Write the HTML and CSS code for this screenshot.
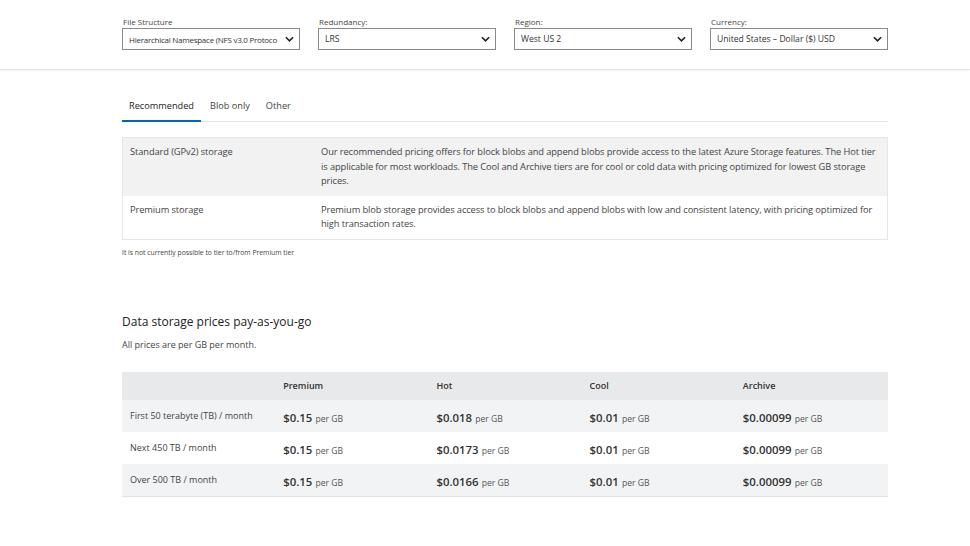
FILE: index.html
```html
<!DOCTYPE html>
<html lang="en">
<head>
<meta charset="utf-8">
<title>Azure Blob Storage pricing</title>
<link rel="stylesheet" href="styles.css">
</head>
<body>
<header class="filters">
  <div class="filter">
    <label class="filter-label">File Structure</label>
    <div class="select"><span class="select-value tight">Hierarchical Namespace (NFS v3.0 Protoco</span><svg class="chev" viewBox="0 0 10 6"><path d="M1 1l4 4 4-4" fill="none" stroke="#222" stroke-width="1.8"/></svg></div>
  </div>
  <div class="filter">
    <label class="filter-label">Redundancy:</label>
    <div class="select"><span class="select-value">LRS</span><svg class="chev" viewBox="0 0 10 6"><path d="M1 1l4 4 4-4" fill="none" stroke="#222" stroke-width="1.8"/></svg></div>
  </div>
  <div class="filter">
    <label class="filter-label">Region:</label>
    <div class="select"><span class="select-value">West US 2</span><svg class="chev" viewBox="0 0 10 6"><path d="M1 1l4 4 4-4" fill="none" stroke="#222" stroke-width="1.8"/></svg></div>
  </div>
  <div class="filter">
    <label class="filter-label">Currency:</label>
    <div class="select"><span class="select-value">United States – Dollar ($) USD</span><svg class="chev" viewBox="0 0 10 6"><path d="M1 1l4 4 4-4" fill="none" stroke="#222" stroke-width="1.8"/></svg></div>
  </div>
</header>

<main class="content">
  <nav class="tabs">
    <span class="tab active">Recommended</span>
    <span class="tab">Blob only</span>
    <span class="tab">Other</span>
  </nav>

  <div class="info-table">
    <div class="info-row shaded">
      <div class="info-name">Standard (GPv2) storage</div>
      <div class="info-desc">Our recommended pricing offers for block blobs and append blobs provide access to the latest Azure Storage features. The Hot tier is applicable for most workloads. The Cool and Archive tiers are for cool or cold data with pricing optimized for lowest GB storage prices.</div>
    </div>
    <div class="info-row">
      <div class="info-name">Premium storage</div>
      <div class="info-desc">Premium blob storage provides access to block blobs and append blobs with low and consistent latency, with pricing optimized for high transaction rates.</div>
    </div>
  </div>
  <p class="note">It is not currently possible to tier to/from Premium tier</p>

  <h2 class="section-title">Data storage prices pay-as-you-go</h2>
  <p class="section-sub">All prices are per GB per month.</p>

  <div class="price-table">
    <div class="price-row head">
      <div class="cell"></div>
      <div class="cell">Premium</div>
      <div class="cell">Hot</div>
      <div class="cell">Cool</div>
      <div class="cell">Archive</div>
    </div>
    <div class="price-row shaded">
      <div class="cell label">First 50 terabyte (TB) / month</div>
      <div class="cell"><span class="amt">$0.15</span> <span class="unit">per GB</span></div>
      <div class="cell"><span class="amt">$0.018</span> <span class="unit">per GB</span></div>
      <div class="cell"><span class="amt">$0.01</span> <span class="unit">per GB</span></div>
      <div class="cell"><span class="amt">$0.00099</span> <span class="unit">per GB</span></div>
    </div>
    <div class="price-row">
      <div class="cell label">Next 450 TB / month</div>
      <div class="cell"><span class="amt">$0.15</span> <span class="unit">per GB</span></div>
      <div class="cell"><span class="amt">$0.0173</span> <span class="unit">per GB</span></div>
      <div class="cell"><span class="amt">$0.01</span> <span class="unit">per GB</span></div>
      <div class="cell"><span class="amt">$0.00099</span> <span class="unit">per GB</span></div>
    </div>
    <div class="price-row shaded">
      <div class="cell label">Over 500 TB / month</div>
      <div class="cell"><span class="amt">$0.15</span> <span class="unit">per GB</span></div>
      <div class="cell"><span class="amt">$0.0166</span> <span class="unit">per GB</span></div>
      <div class="cell"><span class="amt">$0.01</span> <span class="unit">per GB</span></div>
      <div class="cell"><span class="amt">$0.00099</span> <span class="unit">per GB</span></div>
    </div>
  </div>
</main>
</body>
</html>
```

FILE: styles.css
```css
* { box-sizing: border-box; }

body {
  margin: 0;
  background: #fff;
  color: #333;
  font-family: "Open Sans", "Noto Sans", sans-serif;
}

.filters {
  display: flex;
  gap: 18px;
  height: 70px;
  padding: 16px 0 0 122px;
  border-bottom: 1px solid #e6e6e6;
  box-shadow: 0 1px 2px rgba(0,0,0,0.05);
}

.filter {
  width: 178px;
  display: flex;
  flex-direction: column;
}

.filter-label {
  font-size: 8px;
  line-height: 12px;
  color: #444;
  padding-left: 1px;
}

.select {
  height: 22px;
  border: 1px solid #8a8a8a;
  display: flex;
  align-items: center;
  padding: 0 5px 0 6px;
  background: #fff;
}

.select-value {
  flex: 1;
  font-size: 8.6px;
  color: #333;
  white-space: nowrap;
  overflow: hidden;
}

.select-value.tight {
  font-size: 8px;
  letter-spacing: -0.25px;
}

.chev {
  width: 9px;
  height: 6px;
  margin-left: 3px;
  flex: none;
}

.content {
  padding: 25px 0 0 122px;
  width: 888px;
}

.tabs {
  display: flex;
  gap: 2px;
  border-bottom: 1px solid #e3e3e3;
  height: 27px;
}

.tab {
  font-size: 9.2px;
  line-height: 14px;
  padding: 4px 7px 0;
  color: #444;
}

.tab.active {
  color: #222;
  border-bottom: 2px solid #0067b8;
  margin-bottom: -1px;
}

.info-table {
  margin-top: 15px;
  border: 1px solid #e6e6e6;
}

.info-row {
  display: flex;
  padding: 7px 0 7px;
}

.info-row.shaded { background: #f2f2f3; }

.info-name {
  width: 191px;
  padding-left: 7px;
  font-size: 9.3px;
  letter-spacing: -0.1px;
  line-height: 14.5px;
  color: #444;
}

.info-desc {
  flex: 1;
  padding: 0 6px 0 7px;
  font-size: 9.3px;
  letter-spacing: -0.1px;
  line-height: 14.5px;
  color: #444;
}

.note {
  margin: 9px 0 0;
  font-size: 6.8px;
  line-height: 8px;
  color: #444;
}

.section-title {
  margin: 57px 0 0;
  font-size: 12px;
  line-height: 16px;
  font-weight: 500;
  color: #222;
}

.section-sub {
  margin: 9px 0 0;
  font-size: 9px;
  line-height: 12px;
  color: #444;
}

.price-table {
  margin-top: 21px;
  border-bottom: 1px solid #e2e2e2;
}

.price-row {
  display: grid;
  grid-template-columns: repeat(5, 1fr);
  height: 32px;
  align-items: center;
}

.price-row.head {
  height: 28px;
  background: #e8e9ea;
  font-size: 9px;
  font-weight: 600;
  color: #333;
}

.price-row.shaded { background: #f2f3f4; }

.cell {
  padding-left: 8px;
  white-space: nowrap;
}

.cell.label {
  font-size: 9px;
  color: #444;
  margin-top: -1px;
}

.amt {
  font-size: 11.4px;
  font-weight: 600;
  color: #333;
}

.unit {
  font-size: 8.6px;
  color: #555;
  margin-left: -1px;
}
```
